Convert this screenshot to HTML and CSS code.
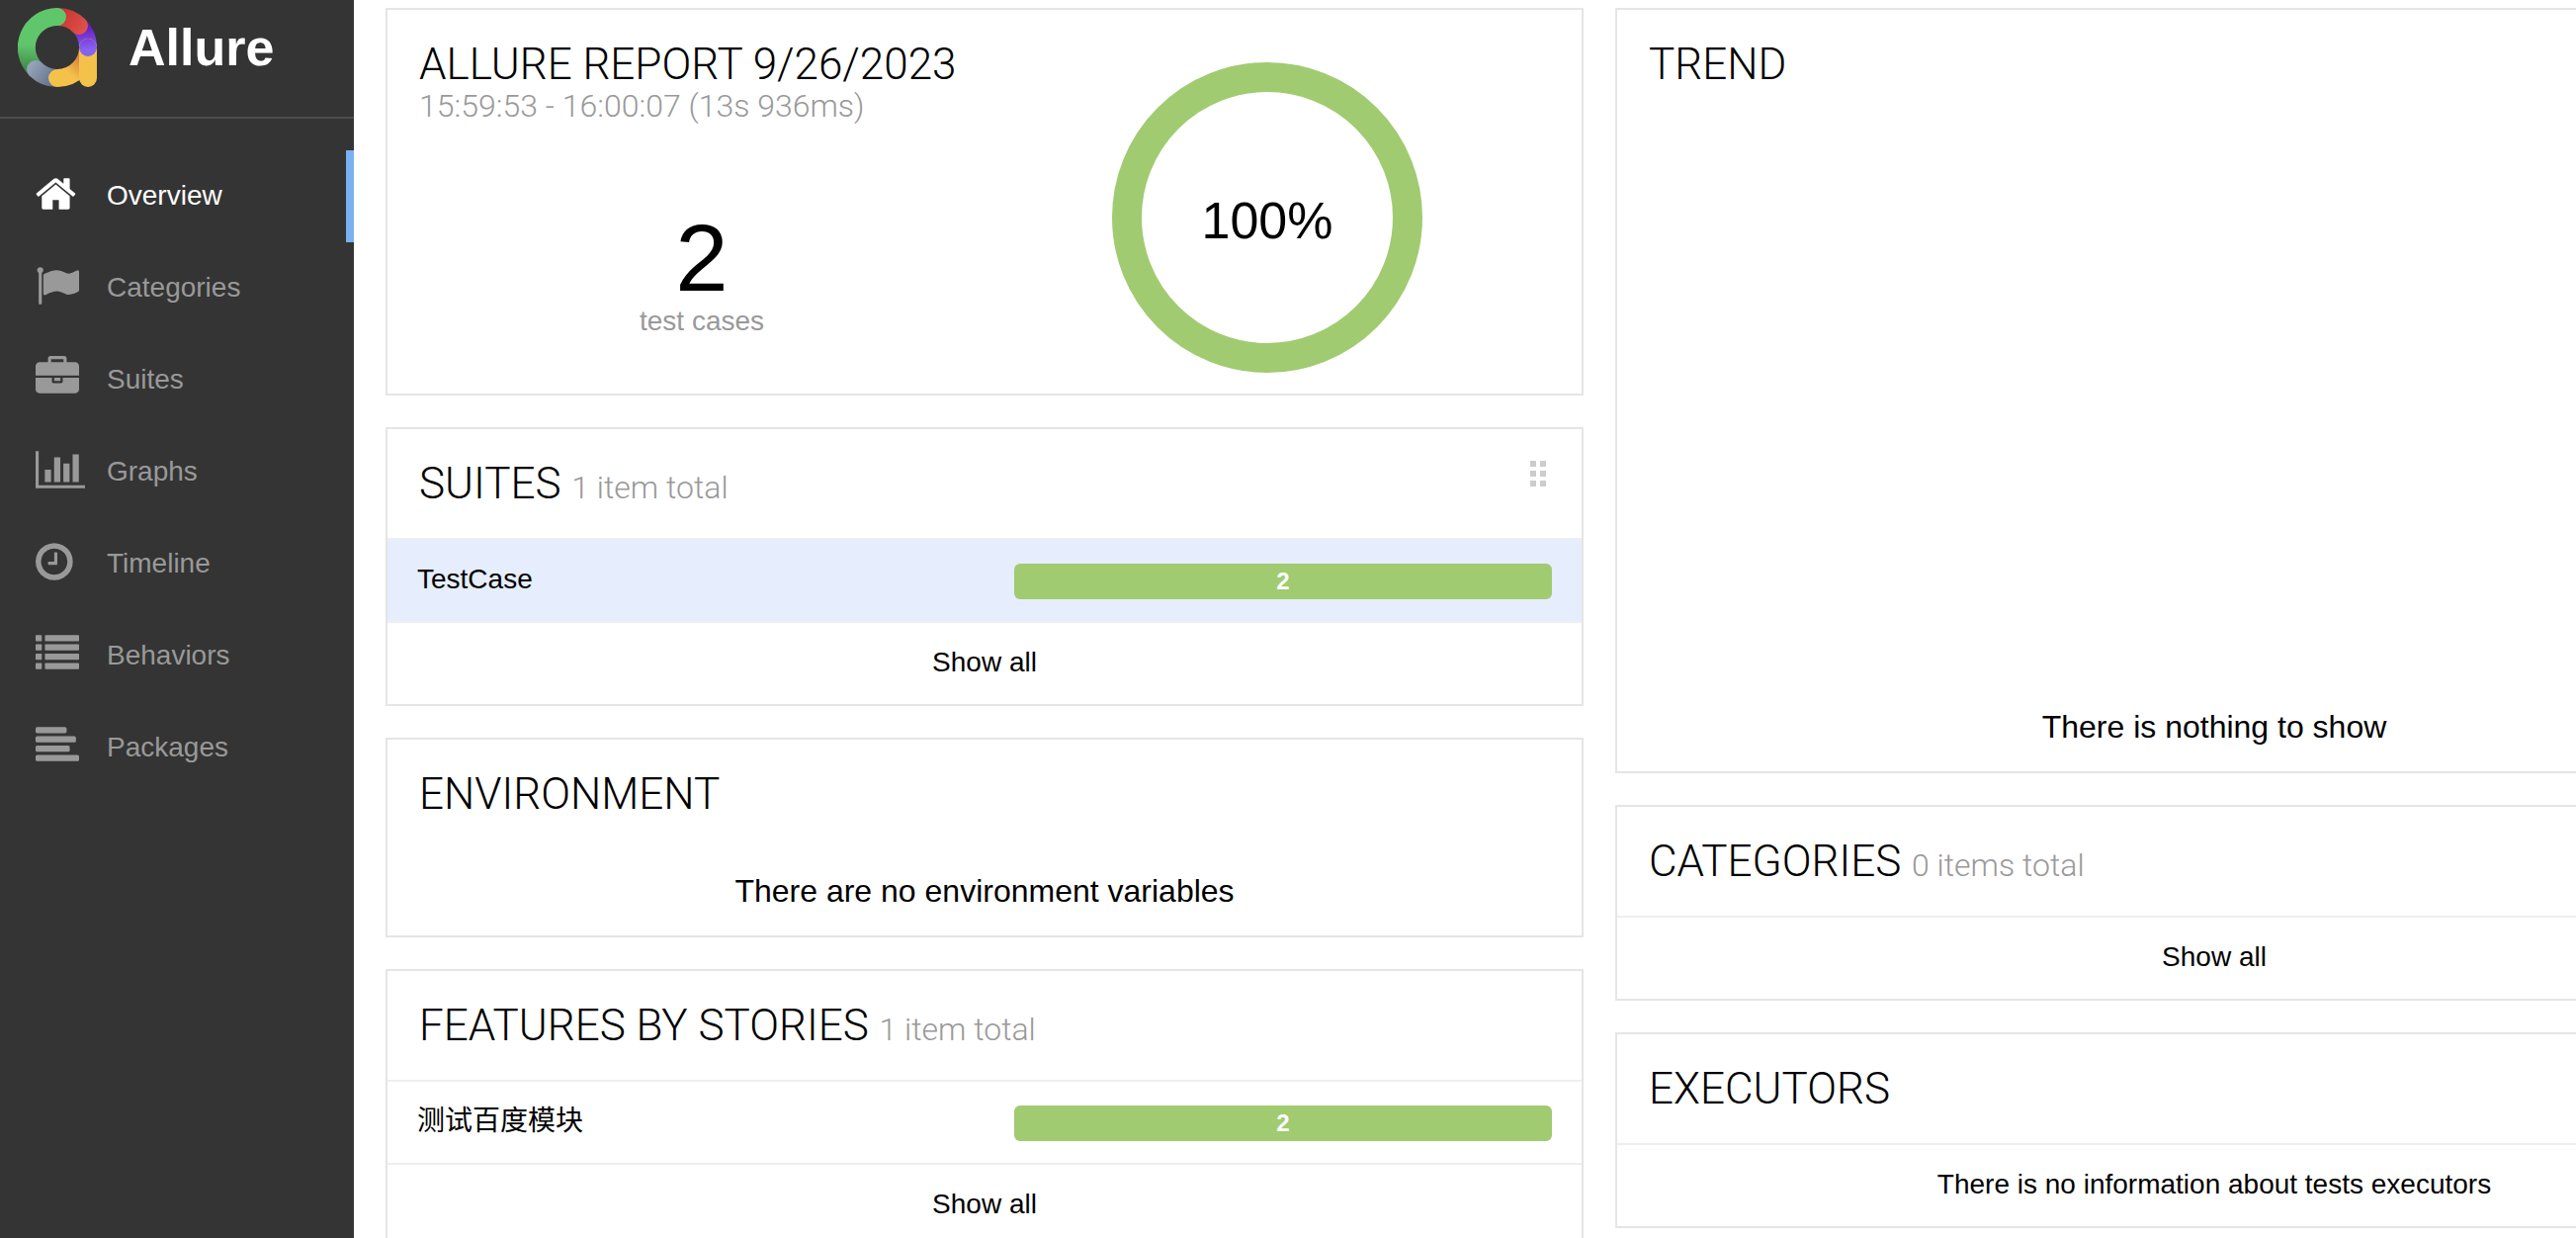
FILE: index.html
```html
<!DOCTYPE html>
<html lang="en">
<head>
<meta charset="utf-8">
<title>Allure Report</title>
<link rel="stylesheet" href="styles.css">
</head>
<body>
<div class="app">
  <aside class="side">
    <a class="brand" href="#">
      <svg class="brand-mark" viewBox="0 0 80 80" aria-hidden="true">
        <defs>
          <linearGradient id="g-green" gradientUnits="userSpaceOnUse" x1="16" y1="38" x2="14" y2="64"><stop offset="0" stop-color="#60c66b"/><stop offset="1" stop-color="#3f8548"/></linearGradient>
          <linearGradient id="g-red" gradientUnits="userSpaceOnUse" x1="44" y1="8" x2="68" y2="24"><stop offset="0" stop-color="#c93731"/><stop offset="1" stop-color="#e0524c"/></linearGradient>
          <linearGradient id="g-violet" gradientUnits="userSpaceOnUse" x1="70" y1="20" x2="72" y2="42"><stop offset="0" stop-color="#6a1fc4"/><stop offset="1" stop-color="#8762ef"/></linearGradient>
          <linearGradient id="g-grey" gradientUnits="userSpaceOnUse" x1="14" y1="58" x2="36" y2="74"><stop offset="0" stop-color="#94a2b8"/><stop offset="1" stop-color="#65748b"/></linearGradient>
          <linearGradient id="g-gold" gradientUnits="userSpaceOnUse" x1="64" y1="52" x2="52" y2="66"><stop offset="0" stop-color="#d8833a"/><stop offset="1" stop-color="#f4c24b"/></linearGradient>
        </defs>
        <g fill="none" stroke-width="18" stroke-linecap="round">
          <path d="M62 18A31 31 0 0 1 71 40" stroke="url(#g-violet)"/>
          <path d="M40 9A31 31 0 0 1 62 18" stroke="url(#g-red)"/>
          <path d="M18 62A31 31 0 0 1 40 9" stroke="url(#g-green)"/>
          <path d="M40 71A31 31 0 0 1 18 62" stroke="url(#g-grey)"/>
          <path d="M71 40A31 31 0 0 1 40 71" stroke="url(#g-gold)"/>
          <path d="M71 40V71" stroke="#f4c24b"/>
        </g>
        <circle cx="71" cy="40" r="9" fill="url(#g-violet)"/>
      </svg>
      <span class="brand-name">Allure</span>
    </a>
    <nav class="nav">
      <a class="nav-item nav-item-active" href="#overview"><span class="nav-icon"><svg viewBox="64 0 1792 1792" aria-hidden="true"><path d="M1472 992v480q0 26-19 45t-45 19h-384v-384h-256v384h-384q-26 0-45-19t-19-45v-480q0-1 .5-3t.5-3l575-474 575 474q1 2 1 6zm223-69l-62 74q-8 9-21 11h-3q-13 0-21-7l-692-577-692 577q-12 8-24 7-13-2-21-11l-62-74q-8-10-7-23.500t11-21.500l719-599q32-26 76-26t76 26l244 204v-195q0-14 9-23t23-9h192q14 0 23 9t9 23v408l219 182q10 8 11 21.500t-7 23.500z"/></svg></span>Overview</a>
      <a class="nav-item" href="#categories"><span class="nav-icon"><svg viewBox="0 0 1792 1792" aria-hidden="true"><path d="M320 256q0 72-64 110v1266q0 13-9.500 22.500t-22.500 9.500h-64q-13 0-22.500-9.500t-9.500-22.500v-1266q-64-38-64-110 0-53 37.500-90.500t90.500-37.500 90.500 37.500 37.500 90.500zm1472 64v763q0 25-12.500 38.500t-39.500 27.500q-215 116-369 116-61 0-123.500-22t-108.500-48-115.500-48-142.500-22q-192 0-464 146-17 9-33 9-26 0-45-19t-19-45v-742q0-32 31-55 21-14 79-43 236-120 421-120 107 0 200 29t219 88q38 19 88 19 54 0 117.500-21t110-47 88-47 54.500-21q26 0 45 19t19 45z"/></svg></span>Categories</a>
      <a class="nav-item" href="#suites"><span class="nav-icon"><svg viewBox="0 0 1792 1792" aria-hidden="true"><path d="M640 256h512v-128h-512v128zm1152 640v480q0 66-47 113t-113 47h-1472q-66 0-113-47t-47-113v-480h672v160q0 26 19 45t45 19h320q26 0 45-19t19-45v-160h672zm-768 0v128h-256v-128h256zm768-480v384h-1792v-384q0-66 47-113t113-47h352v-160q0-40 28-68t68-28h576q40 0 68 28t28 68v160h352q66 0 113 47t47 113z"/></svg></span>Suites</a>
      <a class="nav-item" href="#graphs"><span class="nav-icon"><svg class="wide" viewBox="0 0 2048 1792" aria-hidden="true"><path d="M640 896v512h-256v-512h256zm384-512v1024h-256v-1024h256zm1024 1152v128h-2048v-1536h128v1408h1920zm-640-896v768h-256v-768h256zm384-384v1152h-256v-1152h256z"/></svg></span>Graphs</a>
      <a class="nav-item" href="#timeline"><span class="nav-icon"><svg viewBox="128 0 1792 1792" aria-hidden="true"><path d="M1024 544v448q0 14-9 23t-23 9h-320q-14 0-23-9t-9-23v-64q0-14 9-23t23-9h224v-352q0-14 9-23t23-9h64q14 0 23 9t9 23zm416 352q0-148-73-273t-198-198-273-73-273 73-198 198-73 273 73 273 198 198 273 73 273-73 198-198 73-273zm224 0q0 209-103 385.500t-279.500 279.500-385.500 103-385.500-103-279.500-279.500-103-385.500 103-385.500 279.500-279.500 385.500-103 385.500 103 279.500 279.500 103 385.500z"/></svg></span>Timeline</a>
      <a class="nav-item" href="#behaviors"><span class="nav-icon"><svg viewBox="0 0 1792 1792" aria-hidden="true"><rect y="128" width="256" height="256" rx="32"/><rect x="384" y="128" width="1408" height="256" rx="32"/><rect y="512" width="256" height="256" rx="32"/><rect x="384" y="512" width="1408" height="256" rx="32"/><rect y="896" width="256" height="256" rx="32"/><rect x="384" y="896" width="1408" height="256" rx="32"/><rect y="1280" width="256" height="256" rx="32"/><rect x="384" y="1280" width="1408" height="256" rx="32"/></svg></span>Behaviors</a>
      <a class="nav-item" href="#packages"><span class="nav-icon"><svg viewBox="0 0 1792 1792" aria-hidden="true"><rect y="128" width="1280" height="256" rx="64"/><rect y="512" width="1664" height="256" rx="64"/><rect y="896" width="1408" height="256" rx="64"/><rect y="1280" width="1792" height="256" rx="64"/></svg></span>Packages</a>
    </nav>
  </aside>

  <main class="main">
    <div class="col">
      <section class="card summary">
        <div>
          <h2 class="title">ALLURE REPORT 9/26/2023</h2>
          <p class="sub">15:59:53 - 16:00:07 (13s 936ms)</p>
          <div class="total"><span class="total-num">2</span><span class="total-label">test cases</span></div>
        </div>
        <svg class="donut" viewBox="0 0 314 314" role="img" aria-label="100% passed">
          <circle cx="157" cy="157" r="142" fill="none" stroke="#a1cb71" stroke-width="30"/>
          <text x="157" y="178" text-anchor="middle">100%</text>
        </svg>
      </section>

      <section class="card">
        <header class="head">
          <h2 class="title">SUITES <small class="sub">1 item total</small></h2>
          <svg class="grip" viewBox="0 0 16 26" aria-hidden="true"><path d="M0 0h6v6H0zM10 0h6v6h-6zM0 10h6v6H0zM10 10h6v6h-6zM0 20h6v6H0zM10 20h6v6h-6z"/></svg>
        </header>
        <a class="row row-hover" href="#suites"><span>TestCase</span><span class="bar">2</span></a>
        <a class="more" href="#suites">Show all</a>
      </section>

      <section class="card">
        <header class="head"><h2 class="title">ENVIRONMENT</h2></header>
        <p class="empty">There are no environment variables</p>
      </section>

      <section class="card">
        <header class="head"><h2 class="title">FEATURES BY STORIES <small class="sub">1 item total</small></h2></header>
        <a class="row" href="#behaviors"><span>测试百度模块</span><span class="bar">2</span></a>
        <a class="more" href="#behaviors">Show all</a>
      </section>
    </div>

    <div class="col">
      <section class="card trend">
        <header class="head"><h2 class="title">TREND</h2></header>
        <p class="empty">There is nothing to show</p>
      </section>

      <section class="card">
        <header class="head"><h2 class="title">CATEGORIES <small class="sub">0 items total</small></h2></header>
        <a class="more" href="#categories">Show all</a>
      </section>

      <section class="card">
        <header class="head"><h2 class="title">EXECUTORS</h2></header>
        <p class="more">There is no information about tests executors</p>
      </section>
    </div>
  </main>
</div>
</body>
</html>
```
FILE: styles.css
```css
* { box-sizing: border-box; }

body {
  margin: 0;
  background: #fff;
  color: #000;
  font: 28px/32px "Liberation Sans", "Noto Sans CJK SC", Arial, sans-serif;
}

h2, p { margin: 0; }
a { color: inherit; text-decoration: none; }

.app {
  display: flex;
  height: 100vh;
}

/* Sidebar */
.side {
  flex: 0 0 358px;
  background: #343434;
  color: #999;
}

.brand {
  display: flex;
  gap: 32px;
  height: 120px;
  padding: 8px 18px;
  border-bottom: 2px solid #4d4d4d;
}

.brand-mark { width: 80px; height: 80px; }

.brand-name {
  color: #fff;
  font-size: 52px;
  font-weight: 700;
  line-height: 80px;
}

.nav { padding-top: 32px; }

.nav-item {
  display: flex;
  height: 93px;
  padding: 22px 0 0 36px;
  line-height: 48px;
}

.nav-item-active {
  border-right: 8px solid #7ab1f0;
  color: #fff;
}

.nav-icon { flex: 0 0 72px; }

.nav-icon svg {
  display: block;
  width: 44px;
  height: 44px;
  overflow: visible;
  fill: currentColor;
}

.nav-icon .wide { width: 50px; }

/* Widgets */
.main {
  flex: 1;
  display: grid;
  grid-template-columns: repeat(2, minmax(1212px, 1fr));
  align-items: start;
  gap: 32px;
  padding: 8px 32px;
  overflow: auto;
  scrollbar-width: none;
}

.col {
  display: grid;
  gap: 32px;
}

.card {
  border: 2px solid #e5e5e5;
  background: #fff;
}

.head {
  display: flex;
  justify-content: space-between;
  padding: 31px 32px;
}

.title {
  font-family: Roboto, "Liberation Sans", sans-serif;
  font-size: 44px;
  font-weight: 300;
  line-height: 48px;
}

.sub {
  color: #999;
  font-family: Roboto, "Liberation Sans", sans-serif;
  font-size: 32px;
  font-weight: 300;
  line-height: 36px;
}

.summary {
  display: grid;
  grid-template-columns: 1fr 1fr;
  padding: 31px 32px 21px;
}

.total {
  display: flex;
  flex-direction: column;
  align-items: center;
  padding-top: 88px;
}

.total-num { font-size: 96px; line-height: 96px; }
.total-label { color: #999; }

.donut {
  justify-self: center;
  width: 314px;
  height: 314px;
  margin-top: 22px;
}

.donut text { font-size: 52px; }

.grip {
  width: 16px;
  height: 26px;
  margin: 1px 4px;
  fill: #ccc;
}

.row {
  display: grid;
  grid-template-columns: 1fr 1fr;
  gap: 60px;
  padding: 24px 30px 22px;
  border-top: 2px solid #eceff1;
}

.row-hover { background: #e6edfc; }

.bar {
  height: 36px;
  border-radius: 6px;
  background: #a1cb71;
  color: #fff;
  font-size: 24px;
  font-weight: 700;
  line-height: 36px;
  text-align: center;
}

.more {
  display: block;
  padding: 24px 30px 26px;
  border-top: 2px solid #eceff1;
  text-align: center;
}

.empty {
  padding: 25px 32px 27px;
  font-size: 32px;
  line-height: 36px;
  text-align: center;
}

.trend {
  display: flex;
  flex-direction: column;
  justify-content: space-between;
  min-height: 774px;
}
```
